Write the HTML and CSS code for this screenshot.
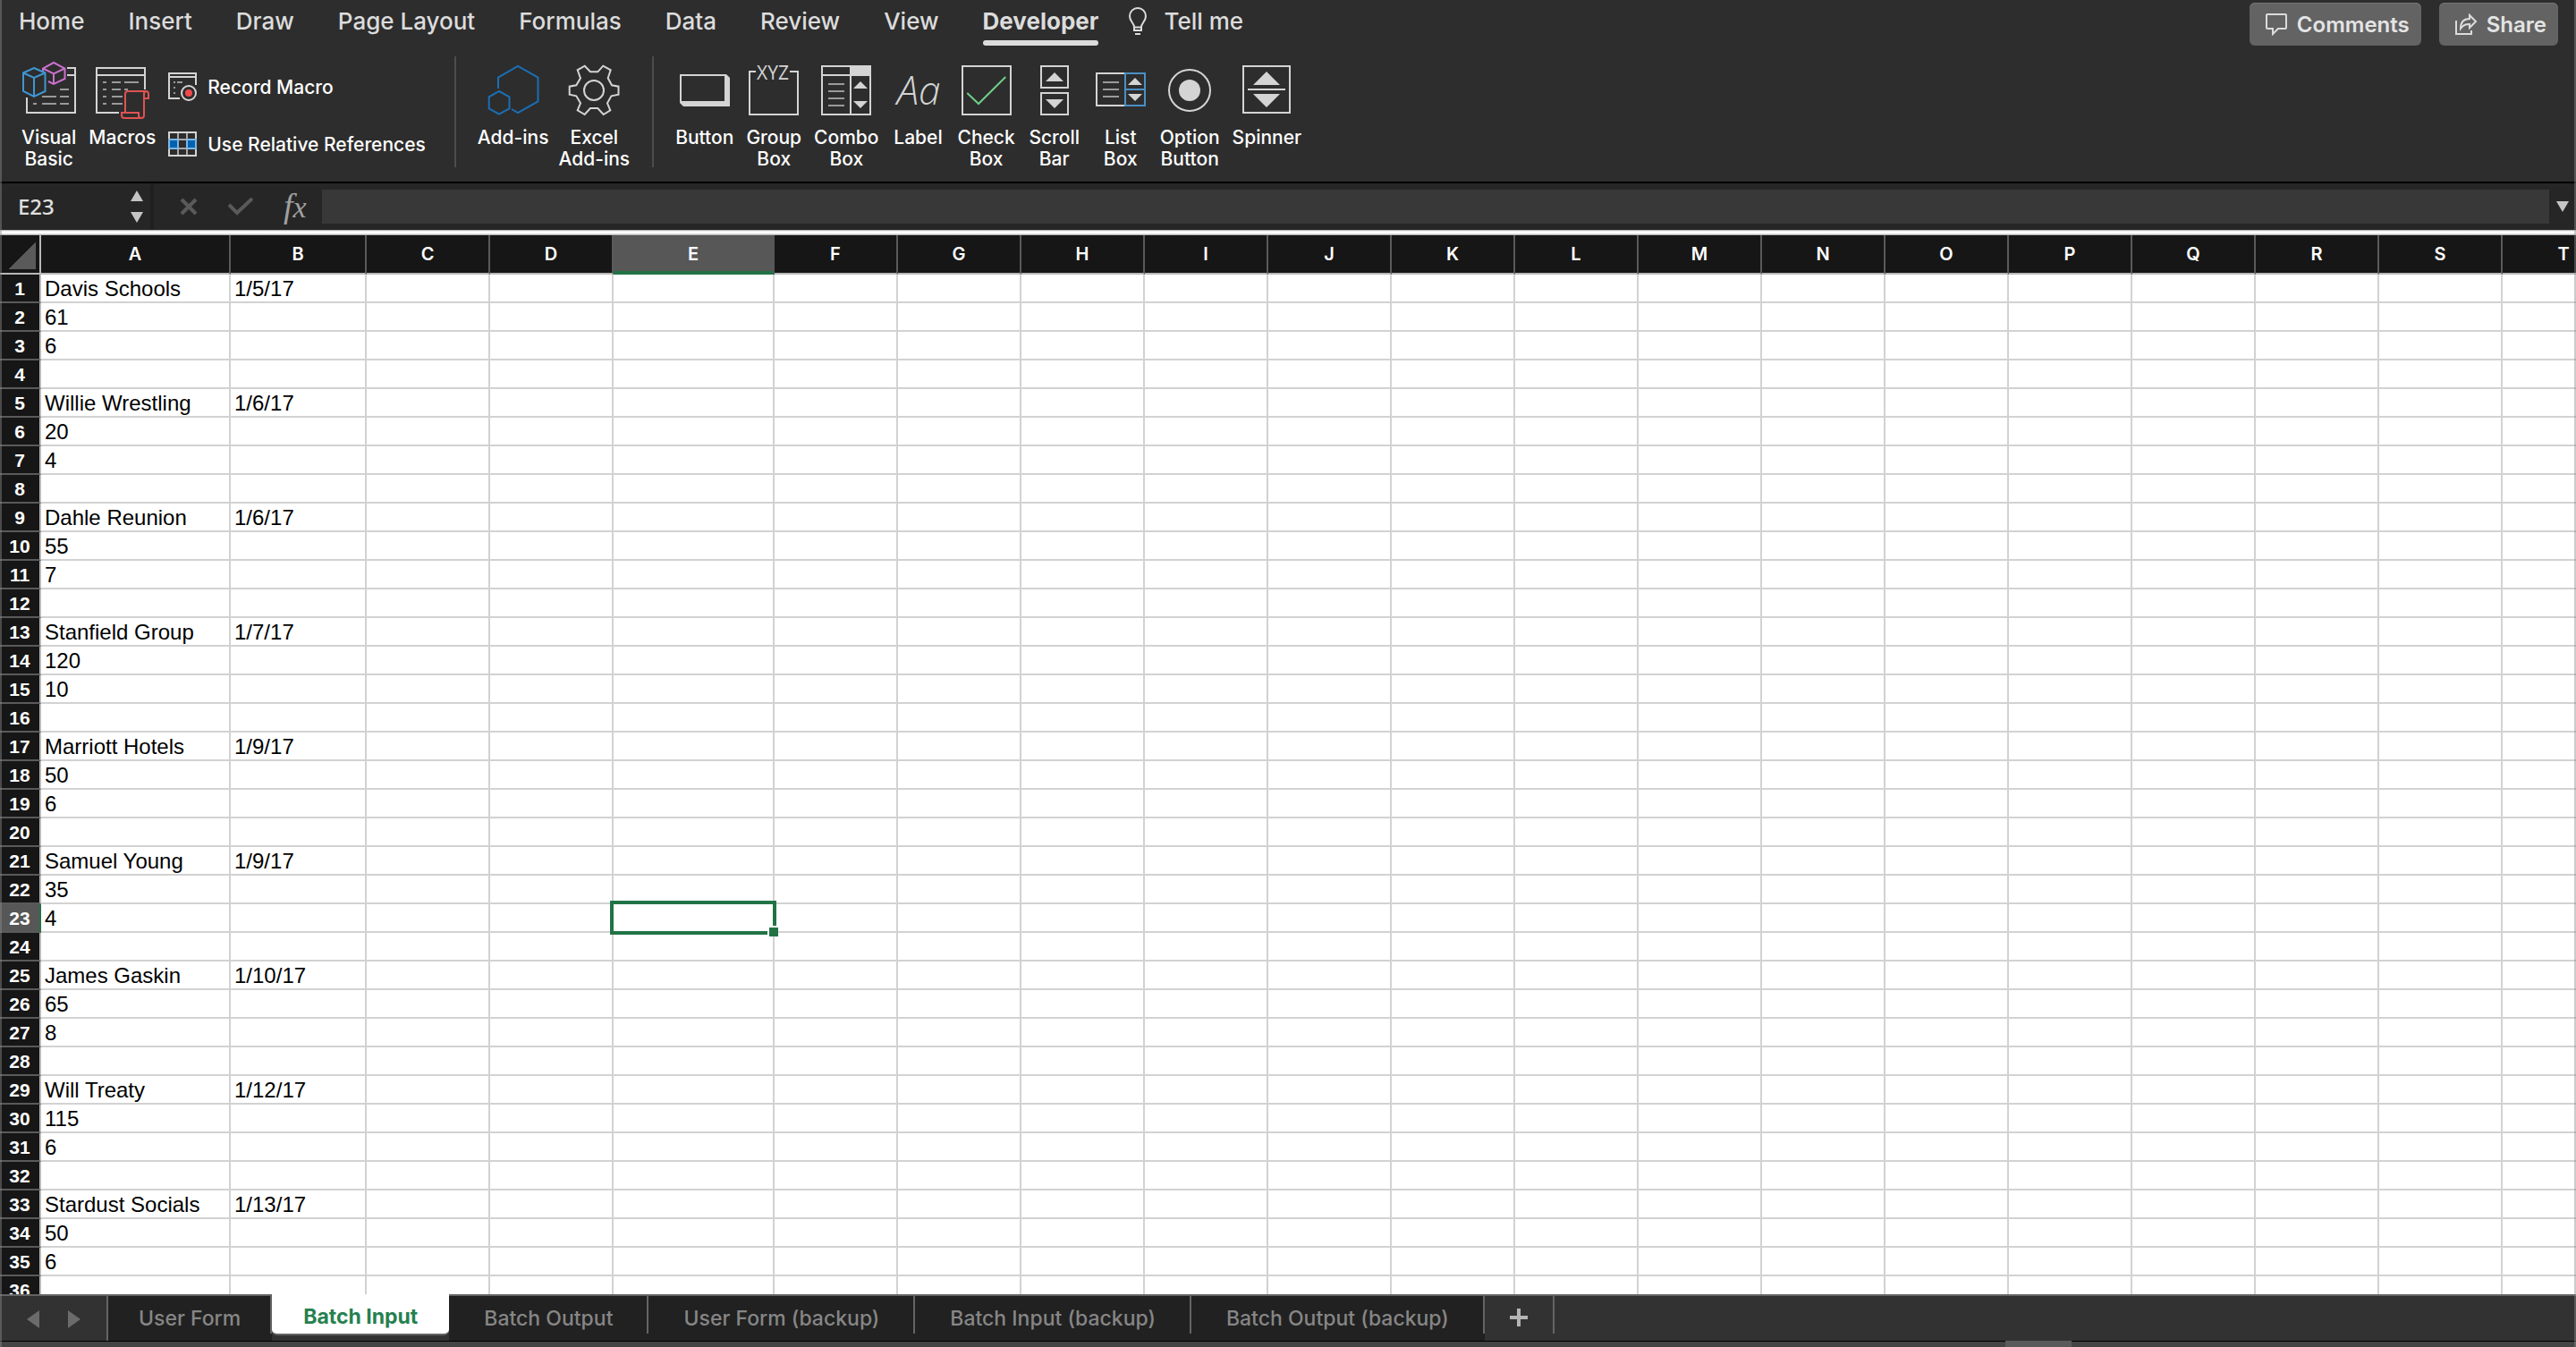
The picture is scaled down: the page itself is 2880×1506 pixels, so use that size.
FILE: index.html
```
<!DOCTYPE html>
<html lang="en">
<head>
    <meta charset="UTF-8">
    <meta name="viewport" content="width=device-width, initial-scale=1.0">
    <title>Batch Input</title>
    <link rel="stylesheet" href="styles.css">
</head>
<body>
    <div class="window">
        <header class="ribbon">
            <div class="menu-row">
                <nav class="menu">
                    <a href="#">Home</a>
                    <a href="#">Insert</a>
                    <a href="#">Draw</a>
                    <a href="#">Page Layout</a>
                    <a href="#">Formulas</a>
                    <a href="#">Data</a>
                    <a href="#">Review</a>
                    <a href="#">View</a>
                    <a href="#" class="active">Developer</a>
                </nav>
                <button class="tell-me">
                    <svg width="22" height="32" viewBox="0 0 22 32" fill="none" stroke="#dcdcdc" stroke-width="2">
                        <path d="M7 26v-4c0-4-5-6-5-12a9 9 0 0 1 18 0c0 6-5 8-5 12v4z"/>
                        <path d="M7 22.500h8M8 30h6"/>
                    </svg>
                    <span>Tell me</span>
                </button>
                <div class="actions">
                    <button class="action-btn">
                        <svg width="26" height="26" viewBox="0 0 26 26" fill="none" stroke="#dcdcdc" stroke-width="2">
                            <path d="M3 2h20a1 1 0 0 1 1 1v14a1 1 0 0 1-1 1h-8l-6 6v-6H3a1 1 0 0 1-1-1V3a1 1 0 0 1 1-1z"/>
                        </svg>
                        Comments
                    </button>
                    <button class="action-btn">
                        <svg width="26" height="26" viewBox="0 0 26 26" fill="none" stroke="#dcdcdc" stroke-width="2">
                            <path d="M2 9v15h17v-4"/>
                            <path d="M7 18c0-8 4-11 10-11V3l7 7-7 7v-4c-5 0-7 1-10 5z"/>
                        </svg>
                        Share
                    </button>
                </div>
            </div>

            <div class="tools">
                <div class="tool-group code-group">
                    <button class="tool">
                        <svg width="60" height="68" viewBox="0 0 60 68" fill="none" stroke-width="2">
                            <path stroke="#d4d4d4" d="M50 8h9v50H5V41M50 16h9"/>
                            <path stroke="#9a9a9a" d="M42 32h10M22 40h16M42 40h10M12 48h4M22 48h16M42 48h10"/>
                            <path stroke="#c870cc" d="M23 12V8.500L35 2l12.500 6.500V20L35 26l-6-3M23 8.500l12 6 12.500-6M35 14.500V26"/>
                            <path stroke="#3f96d2" d="M13 8l12.500 5.500V34L13 40 1 34V13.500zM1 13.500L13 19l12.500-5.500M13 19v21"/>
                        </svg>
                        <span>Visual<br>Basic</span>
                    </button>
                    <button class="tool">
                        <svg width="60" height="68" viewBox="0 0 60 68" fill="none" stroke-width="2">
                            <path stroke="#d4d4d4" d="M55 32V8H1v50h25M1 16h54"/>
                            <path stroke="#9a9a9a" d="M8 24h4M18 24h10M32 24h16M8 32h4M18 32h10M32 32h4M8 40h4M18 40h12M8 48h4M18 48h12"/>
                            <path stroke="#e05252" d="M33 57V37q0-3 3-3h20q3 0 3 3v5h-5M54 36v25q0 3-3 3H32q-3 0-3-3v-3h19v3q0 3 3 3M54 42v-5q0-3 3-3"/>
                        </svg>
                        <span>Macros</span>
                    </button>
                    <div class="small-tools">
                        <button class="small-tool">
                            <svg width="32" height="34" viewBox="0 0 32 34" fill="none" stroke-width="2">
                                <path stroke="#d4d4d4" d="M31 15V2H1v28h12M1 6h30"/>
                                <path stroke="#9a9a9a" d="M6 12h2M10 12h6M6 18h2M6 24h2"/>
                                <circle cx="23" cy="24" r="8" stroke="#d4d4d4"/>
                                <circle cx="23" cy="24" r="4" fill="#f04a4a"/>
                            </svg>
                            Record Macro
                        </button>
                        <button class="small-tool">
                            <svg width="32" height="28" viewBox="0 0 32 28" fill="none" stroke-width="2">
                                <path stroke="#a8a8a8" d="M11 1v26M21 1v26M1 9h30M1 19h30"/>
                                <path stroke="#d4d4d4" d="M1 1h30v26H1z"/>
                                <path fill="#0063b1" stroke="#7db7e4" d="M1 9h10v10H1zM21 9h10v10H21z"/>
                            </svg>
                            Use Relative References
                        </button>
                    </div>
                </div>

                <div class="tool-group addin-group">
                    <button class="tool">
                        <svg width="60" height="68" viewBox="0 0 60 68" fill="none" stroke="#1a6fb5" stroke-width="2">
                            <path d="M13 31V18.700L35 6l22.500 12.700v26.600L35 58l-7-4"/>
                            <path d="M14 34l11.500 6.300v13L14 59.700 2.700 53.300v-13z"/>
                        </svg>
                        <span>Add-ins</span>
                    </button>
                    <button class="tool">
                        <svg width="60" height="68" viewBox="0 0 60 68" fill="none" stroke="#d4d4d4" stroke-width="2">
                            <path d="M19.700 5.700L26 12.300h8.300l6-6.600 8.400 4.600-3 9 4.300 8 7.500 1.400v9l-8 1.600-4.500 8 3.300 8-7.600 4.700-6.400-7H26L19.700 60l-8-4.700 3.300-8-4.700-8-7.600-1.600v-9l7.600-1.400 4.700-8-3.300-9z"/>
                            <circle cx="30" cy="33" r="11"/>
                        </svg>
                        <span>Excel<br>Add-ins</span>
                    </button>
                </div>

                <div class="tool-group">
                    <button class="tool">
                        <svg width="60" height="68" viewBox="0 0 60 68">
                            <path fill="#d4d4d4" fill-rule="evenodd" d="M2 15h52l4 4v32H6l-4-4zM4 17v28h48V17z"/>
                        </svg>
                        <span>Button</span>
                    </button>
                    <button class="tool">
                        <svg width="60" height="68" viewBox="0 0 60 68" fill="none">
                            <path stroke="#d4d4d4" stroke-width="2" d="M10 12H3v48h54V12h-9"/>
                            <text class="glyph-xyz" x="29" y="21" text-anchor="middle">XYZ</text>
                        </svg>
                        <span>Group<br>Box</span>
                    </button>
                    <button class="tool">
                        <svg width="60" height="68" viewBox="0 0 60 68" fill="none" stroke-width="2">
                            <path stroke="#d4d4d4" d="M3 6h54v54H3zM3 16h54M35 16v44"/>
                            <path stroke="#9a9a9a" d="M10 26h18M10 34h18M10 42h18M10 50h18"/>
                            <path fill="#d4d4d4" d="M34 5h24v12H34zM46 23l8 8H38zM38 45h16l-8 8z"/>
                        </svg>
                        <span>Combo<br>Box</span>
                    </button>
                    <button class="tool">
                        <svg width="60" height="68" viewBox="0 0 60 68">
                            <text class="glyph-aa" x="30" y="49" text-anchor="middle">Aa</text>
                        </svg>
                        <span>Label</span>
                    </button>
                    <button class="tool">
                        <svg width="60" height="68" viewBox="0 0 60 68" fill="none" stroke-width="2">
                            <path stroke="#d4d4d4" d="M3 6h54v54H3z"/>
                            <path stroke="#6fce86" d="M8.300 36L21 48l30.300-30"/>
                        </svg>
                        <span>Check<br>Box</span>
                    </button>
                    <button class="tool">
                        <svg width="60" height="68" viewBox="0 0 60 68" fill="none" stroke-width="2">
                            <path stroke="#d4d4d4" d="M15 6h30v24H15zM15 36h30v24H15z"/>
                            <path fill="#d4d4d4" d="M30 13l10 10H20zM20 43h20L30 53z"/>
                        </svg>
                        <span>Scroll<br>Bar</span>
                    </button>
                    <button class="tool">
                        <svg width="60" height="68" viewBox="0 0 60 68" fill="none" stroke-width="2">
                            <path stroke="#d4d4d4" d="M34 14H3v36h31"/>
                            <path stroke="#9a9a9a" d="M10 24h18M10 32h18M10 40h18"/>
                            <path stroke="#4a90c4" d="M35 14h22v36H35zM35 32h22"/>
                            <path fill="#d4d4d4" d="M46 19l8 8H38zM38 37h16l-8 8z"/>
                        </svg>
                        <span>List<br>Box</span>
                    </button>
                    <button class="tool">
                        <svg width="60" height="68" viewBox="0 0 60 68" fill="none">
                            <circle cx="30" cy="33" r="23" stroke="#d4d4d4" stroke-width="2"/>
                            <circle cx="30" cy="33" r="12" fill="#d4d4d4"/>
                        </svg>
                        <span>Option<br>Button</span>
                    </button>
                    <button class="tool">
                        <svg width="60" height="68" viewBox="0 0 60 68" fill="none">
                            <path stroke="#d4d4d4" stroke-width="2" d="M4 6h52v52H4zM9 32h42"/>
                            <path fill="#d4d4d4" d="M30 12l15 15H15zM15 37h30L30 52z"/>
                        </svg>
                        <span>Spinner</span>
                    </button>
                </div>
            </div>
        </header>

        <div class="formula-bar">
            <div class="name-box">
                <input type="text" value="E23" aria-label="Name box">
                <button class="name-stepper" aria-label="Choose name">
                    <svg width="14" height="36" viewBox="0 0 14 36" fill="#c4c4c4">
                        <path d="M7 0l7 12H0zM0 24h14L7 36z"/>
                    </svg>
                </button>
            </div>
            <div class="formula-buttons">
                <button aria-label="Cancel">
                    <svg width="20" height="20" viewBox="0 0 20 20" fill="none" stroke="#5a5a5a" stroke-width="4">
                        <path d="M2 2l16 16M18 2L2 18"/>
                    </svg>
                </button>
                <button aria-label="Enter">
                    <svg width="28" height="20" viewBox="0 0 28 20" fill="none" stroke="#5a5a5a" stroke-width="4">
                        <path d="M1 8l9 9L27 1"/>
                    </svg>
                </button>
                <button class="fx" aria-label="Insert function">f<span>x</span></button>
            </div>
            <input type="text" class="formula-input" aria-label="Formula">
            <button class="expand" aria-label="Expand formula bar">
                <svg width="14" height="12" viewBox="0 0 14 12" fill="#c4c4c4"><path d="M0 0h14L7 12z"/></svg>
            </button>
        </div>
        <div class="divider"></div>

        <main class="sheet">
            <table class="grid" id="grid"></table>
        </main>

        <footer class="tab-bar">
            <div class="tab-nav">
                <button aria-label="Previous sheet">
                    <svg width="14" height="20" viewBox="0 0 14 20" fill="#6b6b6b"><path d="M14 0v20L0 10z"/></svg>
                </button>
                <button aria-label="Next sheet">
                    <svg width="14" height="20" viewBox="0 0 14 20" fill="#6b6b6b"><path d="M0 0l14 10L0 20z"/></svg>
                </button>
            </div>
            <button class="sheet-tab">User Form</button>
            <button class="sheet-tab active">Batch Input</button>
            <button class="sheet-tab">Batch Output</button>
            <button class="sheet-tab">User Form (backup)</button>
            <button class="sheet-tab">Batch Input (backup)</button>
            <button class="sheet-tab">Batch Output (backup)</button>
            <button class="add-sheet" aria-label="New sheet">
                <svg width="22" height="22" viewBox="0 0 22 22" stroke="#b4b4b4" stroke-width="4"><path d="M1 11h20M11 1v20"/></svg>
            </button>
        </footer>
        <div class="status-strip"><div class="thumb"></div></div>
    </div>

    <script>
        // Sheet contents: name, date, guests, hours
        const bookings = [
            ['Davis Schools', '1/5/17', 61, 6],
            ['Willie Wrestling', '1/6/17', 20, 4],
            ['Dahle Reunion', '1/6/17', 55, 7],
            ['Stanfield Group', '1/7/17', 120, 10],
            ['Marriott Hotels', '1/9/17', 50, 6],
            ['Samuel Young', '1/9/17', 35, 4],
            ['James Gaskin', '1/10/17', 65, 8],
            ['Will Treaty', '1/12/17', 115, 6],
            ['Stardust Socials', '1/13/17', 50, 6]
        ];
        const columns = 'ABCDEFGHIJKLMNOPQRST'.split('');
        const rowCount = 36;
        const selected = { col: 'E', row: 23 };

        // Each booking takes three rows and a blank one
        function cellValue(col, row) {
            const booking = bookings[Math.floor((row - 1) / 4)];
            const line = (row - 1) % 4;
            if (!booking) return '';
            if (col === 'A') return [booking[0], booking[2], booking[3], ''][line];
            if (col === 'B' && line === 0) return booking[1];
            return '';
        }

        function buildGrid() {
            let html = '<colgroup><col class="col-head">';
            columns.forEach(col => {
                html += `<col class="col-${col.toLowerCase()}">`;
            });
            html += '</colgroup><thead><tr><th class="corner"></th>';
            columns.forEach(col => {
                html += `<th scope="col"${col === selected.col ? ' class="current"' : ''}>${col}</th>`;
            });
            html += '</tr></thead><tbody>';

            for (let row = 1; row <= rowCount; row++) {
                html += `<tr><th scope="row"${row === selected.row ? ' class="current"' : ''}>${row}</th>`;
                columns.forEach(col => {
                    const isSelected = col === selected.col && row === selected.row;
                    html += isSelected ? '<td class="selected"><i class="handle"></i></td>' : `<td>${cellValue(col, row)}</td>`;
                });
                html += '</tr>';
            }
            document.getElementById('grid').innerHTML = html + '</tbody>';
        }

        buildGrid();
    </script>
</body>
</html>
```
FILE: styles.css
```
* {
    box-sizing: border-box;
}

body {
    margin: 0;
    font-family: Inter, "Liberation Sans", sans-serif;
    background-color: #2d2d2d;
    color: #fff;
}

button {
    padding: 0;
    border: none;
    background: none;
    color: inherit;
    font: inherit;
    cursor: pointer;
}

svg {
    display: block;
    flex: none;
}

.window {
    position: relative;
    display: flex;
    flex-direction: column;
    height: 100vh;
    overflow: hidden;
}

/* Thin light edge down both sides of the window */
.window::after {
    content: "";
    position: absolute;
    inset: 0;
    border: solid rgba(140, 140, 140, 0.45);
    border-width: 0 2px;
    pointer-events: none;
}

/* Ribbon */
.ribbon {
    background-color: #2d2d2d;
    border-bottom: 2px solid #000;
    padding-bottom: 8px;
}

.menu-row {
    display: flex;
    align-items: flex-start;
    height: 54px;
    padding: 0 20px 0 21px;
}

.menu {
    display: flex;
    gap: 49px;
}

.menu a {
    padding-top: 8px;
    color: #dcdcdc;
    font-size: 26px;
    font-weight: 500;
    line-height: 32px;
    text-decoration: none;
}

.menu a.active {
    font-weight: 700;
}

.menu a.active::after {
    content: "";
    display: block;
    height: 6px;
    margin-top: 5px;
    border-radius: 3px;
    background-color: #dcdcdc;
}

.tell-me {
    display: flex;
    align-items: center;
    gap: 18px;
    margin-left: 33px;
    padding-top: 8px;
    color: #dcdcdc;
    font-size: 26px;
    font-weight: 500;
    line-height: 32px;
}

.actions {
    display: flex;
    gap: 20px;
    margin: 3px 0 0 auto;
}

.action-btn {
    display: flex;
    align-items: center;
    gap: 10px;
    height: 48px;
    padding: 0 13px 0 17px;
    border-radius: 6px;
    background-color: #636363;
    box-shadow: inset 0 1px 0 #757575;
    color: #e4e4e4;
    font-size: 24px;
    font-weight: 600;
}

.tools {
    display: flex;
    align-items: flex-start;
    padding: 9px 0 0 24px;
}

.tool-group {
    display: flex;
    align-items: flex-start;
    gap: 14px;
    height: 132px;
}

.tool {
    display: flex;
    flex-direction: column;
    align-items: center;
    gap: 6px;
    min-width: 60px;
    padding-top: 5px;
    font-size: 21px;
    font-weight: 500;
    line-height: 24px;
}

.small-tools {
    display: flex;
    flex-direction: column;
    gap: 30px;
    padding-top: 17px;
}

.small-tool {
    display: flex;
    align-items: center;
    gap: 12px;
    height: 34px;
    font-size: 21px;
    font-weight: 500;
}

.code-group,
.addin-group {
    margin-right: 24px;
    border-right: 2px solid #4c4c4c;
    height: 124px;
}

.code-group {
    padding-right: 32px;
}

.addin-group {
    gap: 11px;
    padding-right: 25px;
}

.glyph-xyz {
    fill: #d4d4d4;
    font-family: "Open Sans", sans-serif;
    font-size: 21px;
    font-weight: 400;
}

.glyph-aa {
    fill: #d4d4d4;
    font-family: "Open Sans", sans-serif;
    font-size: 44px;
    font-style: italic;
    font-weight: 300;
}

/* Formula bar */
.formula-bar {
    display: flex;
    align-items: center;
    flex: none;
    height: 52px;
    padding-right: 8px;
    background-color: #262626;
}

.divider {
    flex: none;
    height: 6px;
    background: linear-gradient(#9a9a9a, #fff 30%, #fff 60%, #a8a8a8);
}

.name-box {
    display: flex;
    align-items: center;
    align-self: stretch;
    width: 172px;
    padding: 0 8px 0 20px;
    border-right: 4px solid #202020;
}

.name-box input {
    flex: 1;
    min-width: 0;
    padding: 0 0 2px;
    border: none;
    background: none;
    color: #e0e0e0;
    font-family: "Noto Sans", sans-serif;
    font-size: 24px;
    font-weight: 500;
}

.formula-buttons {
    display: flex;
    align-items: center;
    gap: 34px;
    padding: 0 17px 0 29px;
}

.fx {
    color: #a0a0a0;
    font-family: "Liberation Serif", serif;
    font-size: 38px;
    font-style: italic;
    line-height: 38px;
}

.fx span {
    font-size: 34px;
}

.formula-input {
    flex: 1;
    height: 38px;
    padding: 0 8px;
    border: none;
    background-color: #383838;
    color: #fff;
    font-size: 24px;
}

.expand {
    margin-left: 8px;
}

/* Grid */
.sheet {
    flex: 1;
    min-height: 0;
    overflow: hidden;
    background-color: #fff;
}

.grid {
    width: 2936px;
    table-layout: fixed;
    border-collapse: separate;
    border-spacing: 0;
    font-family: "Liberation Sans", Arial, sans-serif;
    font-size: 24px;
    color: #000;
}

.grid col {
    width: 138px;
}

.grid .col-head {
    width: 46px;
}

.grid .col-a {
    width: 212px;
}

.grid .col-b {
    width: 152px;
}

.grid .col-e {
    width: 180px;
}

.grid th,
.grid td {
    height: 32px;
    padding: 2px 0 0 4px;
    border: solid #d2d2d2;
    border-width: 0 2px 2px 0;
    line-height: 28px;
    text-align: left;
    white-space: nowrap;
}

.grid th {
    padding: 2px 0 0;
    background-color: #161616;
    color: #fff;
    font-size: 21px;
    font-weight: 700;
    text-align: center;
}

.grid thead th {
    height: 44px;
    padding: 0;
    border-right-color: #5a5a5a;
    border-bottom-color: #b8b8b8;
    font-family: Inter, sans-serif;
    font-size: 20px;
    font-weight: 600;
}

.grid tbody th {
    border-right-color: #b8b8b8;
    border-bottom-color: #5a5a5a;
}

.grid thead .corner {
    border-right-color: #b8b8b8;
    background-image: linear-gradient(to bottom right, transparent 50%, #5a5a5a 50%);
    background-repeat: no-repeat;
    background-position: right 4px bottom 4px;
    background-size: 30px 30px;
}

.grid thead .current {
    background-color: #575757;
    border-right-color: #575757;
    border-bottom-color: #217346;
    box-shadow: inset 0 -2px 0 #217346;
}

.grid tbody .current {
    background-color: #575757;
    border-right-color: #217346;
}

.grid .selected {
    position: relative;
}

.selected::before {
    content: "";
    position: absolute;
    inset: -4px;
    border: 4px solid #217346;
}

.handle {
    position: absolute;
    right: -6px;
    bottom: -6px;
    width: 12px;
    height: 12px;
    border: solid #fff;
    border-width: 2px 0 0 2px;
    background-color: #217346;
}

/* Sheet tabs */
.tab-bar {
    display: flex;
    flex: none;
    height: 52px;
    border-top: 2px solid #646464;
    background-color: #323232;
}

.tab-nav {
    display: flex;
    align-items: center;
    gap: 32px;
    padding: 0 29px 0 30px;
    height: 52px;
    border-right: 2px solid #646464;
}

.sheet-tab {
    position: relative;
    padding: 0 40px 0 39px;
    background-color: #212121;
    color: #868686;
    font-size: 23px;
    font-weight: 500;
}

.sheet-tab::after {
    content: "";
    position: absolute;
    top: 0;
    right: 0;
    width: 2px;
    height: 42px;
    background-color: #646464;
}

.tab-nav + .sheet-tab {
    padding: 0 35px 0 34px;
}

.sheet-tab.active {
    height: 46px;
    margin-top: -2px;
    padding: 6px 35px 0;
    border-bottom: 2px solid #646464;
    border-radius: 0 0 6px 6px;
    background-color: #fff;
    color: #26804f;
    font-weight: 700;
}

.sheet-tab.active::after {
    display: none;
}

.add-sheet {
    padding: 6px 27px 0;
    height: 42px;
    border-right: 2px solid #646464;
}

.status-strip {
    flex: none;
    height: 7px;
    border-top: 1px solid #000;
    background-color: #444;
}

.thumb {
    width: 74px;
    height: 7px;
    margin: -1px 564px 0 auto;
    background-color: #5a5a5a;
}
```
